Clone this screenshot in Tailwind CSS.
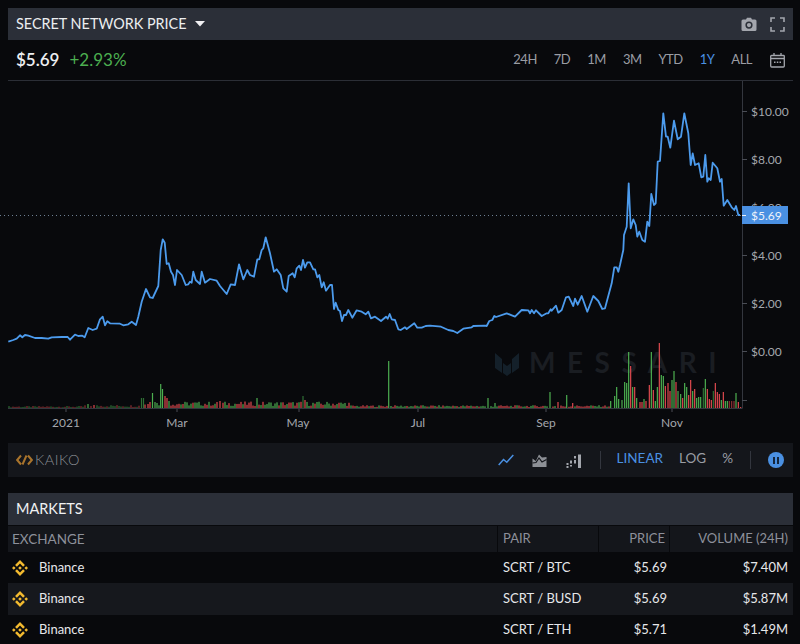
<!doctype html>
<html>
<head>
  <meta charset="UTF-8">
  <script src="https://cdn.jsdelivr.net/npm/@tailwindcss/browser@4"></script>
</head>
<body class="bg-[#08090c] font-['Lato',sans-serif]">
<div class="w-[800px] h-[644px] overflow-hidden">

  <!-- title bar -->
  <div class="ml-2 mr-[7px] mt-2 h-[32px] bg-[#2b2f38] flex items-center pl-2 pr-[8px]">
    <span class="text-[14.400px] text-[#eceef0]">SECRET NETWORK PRICE</span>
    <svg class="ml-2" width="10" height="6" viewBox="0 0 10 6"><path d="M0 0h10L5 5.500z" fill="#f0f0f2"/></svg>
    <svg class="ml-auto" width="16" height="15" viewBox="0 0 16 15"><path fill-rule="evenodd" d="M2 2.500h3L6 .8h4l1 1.700h3a1.500 1.500 0 0 1 1.500 1.500v8.500A1.500 1.500 0 0 1 14 14H2a1.500 1.500 0 0 1-1.500-1.500V4A1.500 1.500 0 0 1 2 2.500zM8 4.500a3.600 3.600 0 1 0 0 7.200 3.600 3.600 0 0 0 0-7.200zM8 6a2.100 2.100 0 1 1 0 4.200A2.100 2.100 0 0 1 8 6z" fill="#a3a6ad"/></svg>
    <svg class="ml-[13px]" width="15" height="15" viewBox="0 0 15 15"><path d="M1 5V1h4M10 1h4v4M14 10v4h-4M5 14H1v-4" fill="none" stroke="#a3a6ad" stroke-width="1.600"/></svg>
  </div>

  <!-- price and range -->
  <div class="ml-2 mr-[7px] h-[41px] border-b border-[#2b2e36] flex items-center pl-2 pr-[8px]">
    <span class="text-[17px] font-semibold text-[#eceef0]">$5.69</span>
    <span class="ml-[10px] text-[17px] text-[#4caf50]">+2.93%</span>
    <div class="ml-auto flex items-center gap-[17px] text-[13px] tracking-[-0.5px] text-[#9a9da4]">
      <span>24H</span>
      <span>7D</span>
      <span>1M</span>
      <span>3M</span>
      <span>YTD</span>
      <span class="text-[#4a90e2]">1Y</span>
      <span>ALL</span>
      <svg class="ml-[1px]" width="15" height="16" viewBox="0 0 15 16"><path d="M1.500 3.500h12a.8.8 0 0 1 .8.8V14a1 1 0 0 1-1 1H1.700a1 1 0 0 1-1-1V4.300a.8.8 0 0 1 .8-.8zM.8 6.500h13.400M4 1v2.500M11 1v2.500" fill="none" stroke="#a3a6ad" stroke-width="1.300"/><path d="M4 9.500h1.500V11H4zM6.800 9.500h1.500V11H6.800zM9.500 9.500H11V11H9.500z" fill="#a3a6ad"/></svg>
    </div>
  </div>

  <!-- chart, drawn in page coordinates -->
  <svg id="chart" class="block" width="800" height="362" viewBox="0 81 800 362">
    <!-- watermark -->
    <g fill="#14202a">
      <path d="M495 353l7 6v14l-7-5zM519 353l-7 6v14l7-5zM503 363l4 3 4-3v10l-4 3-4-3z"/>
    </g>
    <text x="529" y="373" fill="#1a1d22" font-size="28" font-weight="700" letter-spacing="11.500">MESSARI</text>

    <g id="bars"></g>

    <!-- axes -->
    <path d="M742.500 81V408M8 408.500H742.500" stroke="#33363e" stroke-width="1" fill="none"/>
    <path d="M742 111.500h5M742 159.500h5M742 207.500h5M742 255.500h5M742 303.500h5M742 351.500h5M742 400.500h5M66 409v3M177 409v3M299 409v3M418 409v3M546 409v3M672 409v3" stroke="#4a4d55" stroke-width="1" fill="none"/>

    <g fill="#a4a7ad" font-size="12">
      <text x="751" y="115.500">$10.00</text>
      <text x="751" y="163.500">$8.00</text>
      <text x="751" y="211.500">$6.00</text>
      <text x="751" y="259.500">$4.00</text>
      <text x="751" y="307.500">$2.00</text>
      <text x="751" y="355.500">$0.00</text>
    </g>
    <g fill="#a4a7ad" font-size="12" text-anchor="middle">
      <text x="66" y="426.500">2021</text>
      <text x="177" y="426.500">Mar</text>
      <text x="298" y="426.500">May</text>
      <text x="418" y="426.500">Jul</text>
      <text x="546" y="426.500">Sep</text>
      <text x="672" y="426.500">Nov</text>
    </g>

    <line x1="0" y1="215.500" x2="742" y2="215.500" stroke="#6d7f93" stroke-width="1" stroke-dasharray="1 3"/>

    <polyline fill="none" stroke="#4c9bed" stroke-width="1.800" stroke-linejoin="round" points="8.300,341.700 13.300,340 16.700,338.700 20,335.300 22.300,337.300 25,335 28.300,335.700 35,338 41.700,338 48.300,338.700 51.700,337.300 61.700,337 67.700,337 70,339.700 75,334.700 78.300,336 82.300,335.700 84.700,337.300 88.300,328 92.700,330 96.700,328.700 100,319.300 102.700,316.700 105,325.300 107.300,321.300 110,323.300 120,323.700 123.300,325.300 128.300,324.300 131.700,321.700 136,325 138.300,316.700 141.700,301.700 146,289 150,297.300 152.700,298 158.300,286 160.700,250 162.700,239.300 164.700,242.700 166.700,264 168.700,263.300 171,271.700 173,275 175,285 177,270 181.700,275 185.700,285 188.300,284.300 190,281.700 191.700,282.700 193.300,271.700 195.700,280 200,284 201.700,271.700 205,282.700 210,279 216.700,280.700 220,286 226.700,294 230.700,284.300 235,285 239,264.300 243.300,279.300 247.300,270 250,275 254,276.700 257.300,259.300 259.300,259.300 261.700,250 263.300,248.300 265.700,237.300 270,253.300 274,271.700 276.700,269.300 280.700,275 283.300,288.300 286.700,291.700 288.700,276 292.700,273.300 294.700,277.300 296.700,268.300 299.300,265.700 301,270 303,260 305,267.700 307.300,262.300 310,262.300 313.300,269.300 315,269.300 317.300,277.300 319.300,275 321.700,287.300 323.700,282.300 326,290.700 330,285 332,285 334,309 335.700,302.700 338.300,310 340,311 342,321 344,315 346,315 348.300,310 352.300,317.700 356.700,310.300 361.700,311.700 365.700,314.300 368.300,311.700 371,318.300 375,316.700 381,321 386,316.700 387.700,318.700 389.700,314 391.700,319.300 395,320 398.300,329.300 400.700,330 405,327.300 406.700,329 414.300,323.300 417.300,327.700 421.700,327.700 425.700,326 430,325.700 441,326.700 448.300,330 453.300,331 457.300,333 463.300,328.700 471.700,327.300 473.300,326 485,325.700 486.700,326 489.300,321 492.300,320 494.300,316 496,317 506.700,313.300 510,314.700 515,316.700 521.700,310 528.300,310.300 530,313.300 531.700,310 534,313.300 536,310.300 541.700,316 546.700,313.300 548.300,313.300 550.700,309.300 551.700,310.700 556,305.700 558.300,312.700 561.700,310 566,297.300 568.700,296.700 573.300,306 575,298.700 577.700,304.700 581.700,296 587.300,311.700 593.300,296 598.300,301 602.300,309 605,308.300 611.700,283.300 614.300,267.300 616.700,267.300 618.300,271.700 620,265 623.300,250 624,235 626.700,226.700 628.700,183.300 630.700,228.300 633.300,219.300 635.700,225 637.300,236.700 639.300,231.700 642.300,240 645,241.700 647.300,221.700 649.300,226 651.300,194 654,205 655.700,203.300 657.700,161.700 660,161 663.300,113.300 666,136.700 667.700,136.700 670.300,147.700 674,120.700 677.700,139.300 681,136.700 684.300,113.300 688.300,133.300 690.700,165 692.700,153.300 695,165 698.700,163.300 701.300,177.300 703.300,176.700 705.300,155 707.300,181.700 708.700,178.300 710.700,180 712.700,162.700 717.300,168.300 720,181.700 721.700,179 723.700,205.700 727.300,200 731.700,207.300 734.300,210 736,206 738.300,215 740,215"/>

    <!-- last price tag -->
    <rect x="742" y="206" width="46" height="18" fill="#4a90e2"/>
    <path d="M742 215.500h4" stroke="#e8f0fa"/>
    <text x="751" y="219.500" fill="#eef3fa" font-size="12">$5.69</text>
  </svg>

  <!-- chart toolbar -->
  <div class="ml-2 mr-[7px] h-[34px] bg-[#14161b] flex items-center pl-2 pr-[9px]">
    <svg width="17" height="12" viewBox="0 0 17 12"><path d="M5 1.500L1.200 6 5 10.500M12 1.500L15.800 6 12 10.500M10.500 1.500L6.500 10.500" fill="none" stroke="#a9742c" stroke-width="2"/></svg>
    <span class="ml-[2px] text-[14.500px] font-light tracking-[0.5px] text-[#8b8e94]">KAIKO</span>
    <svg class="ml-auto" width="16" height="12" viewBox="0 0 16 12"><path d="M.7 11L5.500 5.500 8.800 8.300 15.300 1" fill="none" stroke="#4a90e2" stroke-width="1.500"/></svg>
    <svg class="ml-[18px]" width="15" height="15" viewBox="0 0 15 15"><path d="M.5 14V5.500L3.800 8 7 1.500 10 4.500 14.500 4v10z" fill="#8d9096"/><path d="M.5 10L4 9.500 7 5l3 4 4.500-2.500" fill="none" stroke="#14161b" stroke-width="1.200"/></svg>
    <svg class="ml-[19px]" width="15" height="15" viewBox="0 0 15 15"><path d="M12 1.500h3V15h-3z" fill="#a3a6ad"/><path d="M.5 10h2v2h-2zM.5 13h2v2h-2zM4 7.500h2v3H4zM4 12h2v1.500H4zM8 3h2v2.500H8zM8 7h2v3.500H8z" fill="#a3a6ad"/></svg>
    <div class="ml-[19px] w-px h-[18px] bg-[#33363e]"></div>
    <span class="ml-[16px] mb-1 text-[13.500px] text-[#4a90e2]">LINEAR</span>
    <span class="ml-[16px] mb-1 text-[13.500px] text-[#9a9da4]">LOG</span>
    <span class="ml-[16px] mb-1 text-[13.500px] text-[#9a9da4]">%</span>
    <div class="ml-[17px] w-px h-[18px] bg-[#33363e]"></div>
    <div class="ml-[17px] w-[16px] h-[16px] rounded-full bg-[#4a90e2] flex items-center justify-center gap-[2px]">
      <div class="w-[2px] h-[7px] bg-[#14263d]"></div>
      <div class="w-[2px] h-[7px] bg-[#14263d]"></div>
    </div>
  </div>

  <!-- markets -->
  <div class="ml-2 mr-[7px] mt-4 h-[32px] bg-[#2b2f38] flex items-center pl-2">
    <span class="text-[14.500px] text-[#f0f1f3]">MARKETS</span>
  </div>
  <div class="ml-2 mr-[7px] mt-px h-[26px] bg-[#14161b] grid grid-cols-[490px_101px_71px_123px] items-stretch text-[13px] text-[#8d909a]">
    <div class="flex items-center pl-[4px] border-r border-[#08090c] text-[13.500px]">EXCHANGE</div>
    <div class="flex items-center pl-[5px] border-r border-[#08090c]">PAIR</div>
    <div class="flex items-center justify-end pr-[4px] border-r border-[#08090c]">PRICE</div>
    <div class="flex items-center justify-end pr-[5px]">VOLUME (24H)</div>
  </div>

  <div class="ml-2 mr-[7px] h-[31px] grid grid-cols-[490px_101px_71px_123px] items-center text-[13px] text-[#e6e7ea]">
    <div class="flex items-center pl-[4px]">
      <svg width="16" height="16" viewBox="0 0 126.610 126.610"><path fill="#f3ba2f" d="M38.730 53.200l24.590-24.580 24.600 24.600 14.300-14.310L63.320 0 24.420 38.900zM0 63.310l14.300-14.310 14.310 14.310-14.310 14.300zM38.730 73.410l24.590 24.590 24.600-24.600 14.310 14.290-38.900 38.910-38.910-38.880zM98.300 63.310l14.300-14.310 14.310 14.300-14.310 14.320zM77.830 63.300L63.320 48.780 52.590 59.510l-1.240 1.230-2.540 2.540 14.510 14.500 14.510-14.470z"/></svg>
      <span class="ml-[11px]">Binance</span>
    </div>
    <div class="pl-[5px]">SCRT / BTC</div>
    <div class="text-right pr-[3px]">$5.69</div>
    <div class="text-right pr-[5px]">$7.40M</div>
  </div>
  <div class="ml-2 mr-[7px] h-[32px] bg-[#16181d] grid grid-cols-[490px_101px_71px_123px] items-center text-[13px] text-[#e6e7ea]">
    <div class="flex items-center pl-[4px]">
      <svg width="16" height="16" viewBox="0 0 126.610 126.610"><path fill="#f3ba2f" d="M38.730 53.200l24.590-24.580 24.600 24.600 14.300-14.310L63.320 0 24.420 38.900zM0 63.310l14.300-14.310 14.310 14.310-14.310 14.300zM38.730 73.410l24.590 24.590 24.600-24.600 14.310 14.290-38.900 38.910-38.910-38.880zM98.300 63.310l14.300-14.310 14.310 14.300-14.310 14.320zM77.830 63.300L63.320 48.780 52.590 59.510l-1.240 1.230-2.540 2.540 14.510 14.500 14.510-14.470z"/></svg>
      <span class="ml-[11px]">Binance</span>
    </div>
    <div class="pl-[5px]">SCRT / BUSD</div>
    <div class="text-right pr-[3px]">$5.69</div>
    <div class="text-right pr-[5px]">$5.87M</div>
  </div>
  <div class="ml-2 mr-[7px] h-[30px] grid grid-cols-[490px_101px_71px_123px] items-center text-[13px] text-[#e6e7ea]">
    <div class="flex items-center pl-[4px]">
      <svg width="16" height="16" viewBox="0 0 126.610 126.610"><path fill="#f3ba2f" d="M38.730 53.200l24.590-24.580 24.600 24.600 14.300-14.310L63.320 0 24.420 38.900zM0 63.310l14.300-14.310 14.310 14.310-14.310 14.300zM38.730 73.410l24.590 24.590 24.600-24.600 14.310 14.290-38.900 38.910-38.910-38.880zM98.300 63.310l14.300-14.310 14.310 14.300-14.310 14.320zM77.830 63.300L63.320 48.780 52.590 59.510l-1.240 1.230-2.540 2.540 14.510 14.500 14.510-14.470z"/></svg>
      <span class="ml-[11px]">Binance</span>
    </div>
    <div class="pl-[5px]">SCRT / ETH</div>
    <div class="text-right pr-[3px]">$5.71</div>
    <div class="text-right pr-[5px]">$1.49M</div>
  </div>
</div>

<script>
  // volume bars: the tall ones read off the picture, the low ones filled in
  const G = "#4caf50", R = "#df4a4f", DG = "#2f6f35", DR = "#8c3034";
  const peaks = [
    [88,4,G],[94,3,R],[141.500,10,DG],[143.500,10,DG],[148,4,R],[150,6,R],[152.500,15,G],[155,6,G],[157,5,G],[160.700,24,G],[162.500,19,G],[165,12,R],[167,10,R],[169,7,G],[220,7,R],[257,10,G],[303,12,DG],[305,8,R],[388.700,47,G],
    [488,10,G],[495,5,G],[550,16,G],[558,6,R],[566.700,13,G],[572.700,5,R]
  ];
  // zoomed positions from x=610 on: [x, height, colour]
  const tail = [[392,7,G],[404,12,G],[410,21,G],[416,9,G],[426,8,G],[434,26,G],[440,25,G],[446,56,G],[452,42,R],[458,21,G],[464,21,R],[470,10,G],[480,6,R],[486,6,R],[492,9,G],[498,7,R],[508,23,R],[514,56,G],[520,18,R],[526,7,G],[532,21,G],[538,65,R],[544,33,G],[550,32,G],[556,22,R],[564,25,R],[570,17,R],[576,28,G],[582,37,G],[588,26,R],[594,17,G],[602,14,G],[608,10,R],[614,25,G],[620,21,G],[626,13,R],[632,28,R],[638,17,G],[644,19,R],[650,10,G],[656,11,G],[662,11,G],[670,20,DG],[676,29,G],[682,19,R],[688,9,R],[694,8,R],[700,17,DG],[706,25,R],[712,16,R],[718,14,R],[724,8,G],[730,16,R],[736,7,G],[742,7,G],[748,7,DR],[755,7,DR],[762,7,DR],[768,15,G],[775,6,R],[782,1,R]];
  tail.forEach(t => peaks.push([480 + t[0] / 3, t[1], t[2]]));

  const rand = n => { const s = Math.sin(n * 12.9898) * 43758.5453; return s - Math.floor(s); };
  const low = x => {
    if (x < 85) return [0.6, 1.4];
    if (x < 141) return [1, 2.2];
    if (x < 350) return [2, 4.5];
    if (x < 610) return [1, 1.8];
    return [0, 0];
  };

  const bars = document.getElementById("bars");
  const addBar = (x, h, c) => {
    const r = document.createElementNS("http://www.w3.org/2000/svg", "rect");
    r.setAttribute("x", x - 0.6);
    r.setAttribute("y", 408 - h);
    r.setAttribute("width", 1.2);
    r.setAttribute("height", h);
    r.setAttribute("fill", c);
    bars.appendChild(r);
  };

  for (let i = 0; i < 301; i++) {
    const x = 9 + i * 2;
    if (peaks.some(p => Math.abs(p[0] - x) < 1.2)) continue;
    const [a, b] = low(x);
    if (!a) continue;
    addBar(x, a + b * rand(i + 1), rand(i + 500) > 0.5 ? (x < 141 ? DG : G) : (x < 141 ? DR : R));
  }
  peaks.forEach(p => addBar(p[0], p[1], p[2]));
</script>
</body>
</html>
